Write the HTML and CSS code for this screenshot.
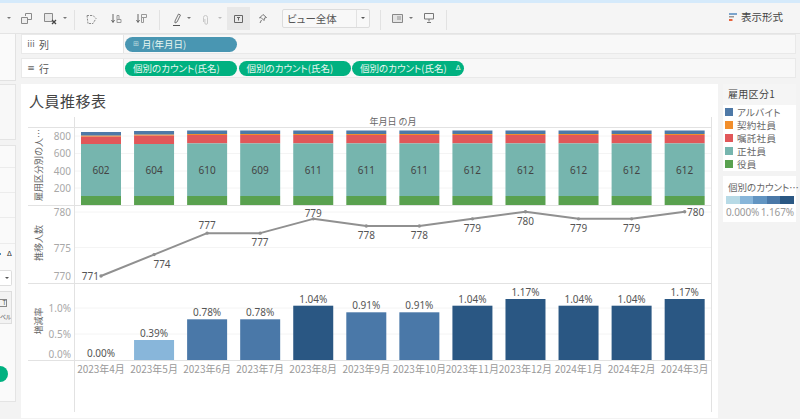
FILE: index.html
```html
<!DOCTYPE html>
<html lang="ja">
<head>
<meta charset="utf-8">
<title>人員推移表</title>
<link rel="stylesheet" href="styles.css">
</head>
<body>
<div class="app">
  <div class="topstrip"></div>
  <header class="toolbar">
    <span class="dot t1"></span>
    <svg class="ic i-a" width="11" height="11" viewBox="0 0 11 11"><path d="M.5 4.500h6v6h-6z" fill="#eee" stroke="#8a8a8a"/><path d="M4.500 3V.5h6v6H7" fill="none" stroke="#8a8a8a"/></svg>
    <svg class="ic i-b" width="13" height="12" viewBox="0 0 13 12"><path d="M.5.500h8v8h-8z" fill="#e8e8e8" stroke="#8a8a8a"/><path d="M8 7l4 4M12 7l-4 4" stroke="#444" stroke-width="1.300"/></svg>
    <span class="dot t2"></span>
    <span class="sep s1"></span>
    <svg class="ic i-c" width="11" height="11" viewBox="0 0 11 11"><path d="M1 1.500h6l3 3-3 5H2z" fill="none" stroke="#8a8a8a" stroke-dasharray="2 1"/></svg>
    <svg class="ic i-d" width="11" height="11" viewBox="0 0 11 11"><path d="M2 0v8M.5 6L2 8.500 3.500 6" fill="none" stroke="#666"/><path d="M6 1.500h2v4H6zM6 5.500h4v3H6z" fill="none" stroke="#999"/></svg>
    <svg class="ic i-e" width="11" height="11" viewBox="0 0 11 11"><path d="M2 0v8M.5 6L2 8.500 3.500 6" fill="none" stroke="#666"/><path d="M5.500.5h5v3h-5zM5.500 3.500h2v5h-2z" fill="none" stroke="#999"/></svg>
    <span class="sep s2"></span>
    <svg class="ic i-f" width="9" height="13" viewBox="0 0 9 13"><path d="M2 8l3.500-7 2 1L4 9l-2 1z" fill="none" stroke="#777"/><path d="M0 12.500h7" stroke="#555"/></svg>
    <span class="dot t3"></span>
    <svg class="ic i-g" width="8" height="12" viewBox="0 0 8 12"><path d="M1.500 8V3.500a2 2 0 0 1 4 0V9a1.300 1.300 0 0 1-2.600 0V5" fill="none" stroke="#c8c8c8"/></svg>
    <span class="dot t4"></span>
    <span class="tbtn"><svg width="9" height="8" viewBox="0 0 9 8"><path d="M.5.500h8v7h-8z" fill="none" stroke="#666"/><path d="M3 2.500h3M4.500 2.500v3" stroke="#666"/></svg></span>
    <svg class="ic i-h" width="8" height="10" viewBox="0 0 8 10"><path d="M4 .500l3.500 3-2 .5-.5 2.500-3-3L.5 4z" fill="none" stroke="#777"/><path d="M2.500 6L1 9" stroke="#777"/></svg>
    <div class="viewsel"><span class="vtext">ビュー全体</span><span class="vcaret"></span></div>
    <span class="sep s3"></span>
    <svg class="ic i-i" width="11" height="9" viewBox="0 0 11 9"><path d="M.5.500h10v8H.5z" fill="#e4e4e4" stroke="#888"/><path d="M5 2h4v4H5z" fill="#bbb"/></svg>
    <span class="dot t5"></span>
    <svg class="ic i-j" width="10" height="10" viewBox="0 0 10 10"><path d="M.5.500h9v5.500h-9zM5 6v2.500M3 9.500h4" fill="none" stroke="#777"/></svg>
    <span class="sep s4"></span>
    <div class="showme">
      <svg width="8" height="9" viewBox="0 0 8 9"><path d="M0 0h8v2H0z" fill="#7ba4cc"/><path d="M0 3h5v1.500H0z" fill="#999"/><path d="M0 6h3.500v2H0z" fill="#e8643c"/></svg>
      <span>表示形式</span>
    </div>
  </header>

  <div class="shelves">
    <div class="leftstub"></div>
    <div class="shelfcol">
      <div class="shelf">
        <div class="shelfname"><span class="ico">iii</span><span>列</span></div>
        <div class="pills"><span class="pill blue"><span class="plus">⊞</span>月(年月日)</span></div>
      </div>
      <div class="shelf">
        <div class="shelfname"><span class="ico">≡</span><span>行</span></div>
        <div class="pills">
          <span class="pill green">個別のカウント(氏名)</span>
          <span class="pill green">個別のカウント(氏名)</span>
          <span class="pill green">個別のカウント(氏名)<span class="delta">Δ</span></span>
        </div>
      </div>
    </div>
  </div>

  <div class="work">
    <aside class="leftpanel">
      <div class="lcard c1"></div>
      <div class="lcard c2">
        <div class="lrow r1"></div>
        <div class="lrow r2"></div>
        <div class="lrow r3"></div>
        <div class="lrow r4"></div>
        <div class="rd"><i class="bluedot"></i><span class="ldelta">Δ</span></div>
        <div class="lrow r5"><span class="ddcaret"></span></div>
        <div class="lrow r6"><span class="tbox">T</span><span class="lbl">ベル</span></div>
        <div class="lrow r7"><span class="gpill"></span></div>
      </div>
    </aside>

    <main class="canvas">
      <h1 class="title">人員推移表</h1>
      <svg id="chart" class="chart" width="697" height="334" viewBox="21 84 697 334" aria-label="人員推移表"></svg>
    </main>

    <aside class="rightpanel">
      <section class="legend">
        <h2 class="legtitle">雇用区分1</h2>
        <ul class="leglist">
          <li><i class="sw c-a"></i>アルバイト</li>
          <li><i class="sw c-b"></i>契約社員</li>
          <li><i class="sw c-c"></i>嘱託社員</li>
          <li><i class="sw c-d"></i>正社員</li>
          <li><i class="sw c-e"></i>役員</li>
        </ul>
      </section>
      <section class="legend ramp">
        <h2 class="legtitle2">個別のカウント…</h2>
        <div class="rampbar"><i class="g1"></i><i class="g2"></i><i class="g3"></i><i class="g4"></i><i class="g5"></i></div>
        <div class="ramplbl"><span>0.000%</span><span>1.167%</span></div>
      </section>
    </aside>
  </div>
</div>
<script src="chart.js"></script>
</body>
</html>
```
FILE: styles.css
```css
* { box-sizing: border-box; }
html, body { margin: 0; padding: 0; }
body { width: 800px; height: 419px; overflow: hidden; background: #f3f3f3; font-family: "Noto Sans CJK JP", "Noto Sans", sans-serif; font-feature-settings: "palt"; color: #555; }
.app { display: flex; flex-direction: column; width: 800px; height: 419px; }
.topstrip { height: 3px; background: #d5eafb; flex: none; }
.toolbar { position: relative; height: 31px; flex: none; background: #f5f5f5; border-bottom: 1px solid #e4e4e4; }
.ic, .dot, .sep, .tbtn, .viewsel, .showme { position: absolute; }
.dot { width: 0; height: 0; border-left: 2px solid transparent; border-right: 2px solid transparent; border-top: 2px solid #777; top: 14px; }
.t1 { left: 7px; } .t2 { left: 63px; } .t3 { left: 187px; } .t4 { left: 218px; border-top-color: #bbb; } .t5 { left: 409px; }
.sep { width: 1px; top: 7px; height: 20px; background: #e2e2e2; }
.s1 { left: 74px; } .s2 { left: 159px; } .s3 { left: 380px; } .s4 { left: 446px; }
.i-a { left: 21px; top: 10px; } .i-b { left: 44px; top: 10px; } .i-c { left: 86px; top: 11px; } .i-d { left: 111px; top: 11px; } .i-e { left: 136px; top: 11px; }
.i-f { left: 173px; top: 10px; } .i-g { left: 202px; top: 11px; } .i-h { left: 259px; top: 11px; } .i-i { left: 392px; top: 11px; } .i-j { left: 424px; top: 10px; }
.tbtn { left: 227px; top: 4px; width: 23px; height: 23px; background: #e8e8e8; display: flex; align-items: center; justify-content: center; }
.viewsel { left: 282px; top: 6px; width: 88px; height: 19px; background: #f8f8f8; border: 1px solid #dcdcdc; border-radius: 2px; display: flex; align-items: center; }
.vtext { flex: 1; padding-left: 4px; font-size: 10.500px; color: #555; }
.vcaret { width: 13px; height: 100%; border-left: 1px solid #e2e2e2; position: relative; }
.vcaret::after { content: ""; position: absolute; left: 4px; top: 7px; border-left: 2px solid transparent; border-right: 2px solid transparent; border-top: 2px solid #555; }
.showme { left: 729px; top: 6px; display: flex; align-items: center; gap: 4px; font-size: 10.500px; color: #444; line-height: 16px; font-feature-settings: normal; }

.shelves { display: flex; flex: none; height: 49px; }
.leftstub { width: 16px; height: 47px; background: #fafafa; border-right: 1px solid #e2e2e2; border-bottom: 1px solid #e2e2e2; }
.shelfcol { flex: 1; display: flex; flex-direction: column; gap: 4px; padding-left: 5px; padding-right: 4px; }
.shelf { height: 20px; display: flex; background: #f8f8f8; border: 1px solid #e9e9e9; }
.shelfname { width: 102px; flex: none; background: #fff; border-right: 1px solid #e4e4e4; display: flex; align-items: center; gap: 4px; padding-left: 5px; font-size: 10px; color: #555; }
.ico { font-size: 9px; width: 8px; text-align: center; font-family: "DejaVu Sans", sans-serif; color: #666; }
.pills { display: flex; gap: 1.500px; align-items: center; padding-left: 1px; }
.pill { height: 15px; width: 112px; border-radius: 8px; display: flex; align-items: center; padding-left: 8px; font-size: 9.500px; white-space: nowrap; color: #e8f6f0; }
.pill.blue { background: #4996b2; }
.pill.green { background: #00b180; }
.plus { font-size: 7px; margin-right: 3px; font-family: "DejaVu Sans", sans-serif; opacity: .7; }
.delta { margin-left: 9px; font-size: 7px; font-family: "DejaVu Sans", sans-serif; }

.work { flex: 1; display: flex; min-height: 0; padding-top: 1px; }
.leftpanel { width: 16px; flex: none; }
.lcard { background: #f8f8f8; border: 1px solid #e4e4e4; border-left: 0; }
.c1 { height: 56px; margin-bottom: 5px; }
.c2 { height: 257px; background: #fafafa; display: flex; flex-direction: column; }
.lrow { border-bottom: 1px solid #ececec; position: relative; overflow: hidden; flex: none; }
.r1 { height: 22px; } .r2 { height: 25px; } .r3 { height: 25px; } .r4 { height: 26px; }
.rd { height: 26px; position: relative; flex: none; }
.bluedot { position: absolute; left: 0; top: 9px; width: 1px; height: 2px; background: #4e8fc0; }
.ldelta { position: absolute; left: 7px; top: 5px; font-size: 7px; line-height: 10px; font-family: "DejaVu Sans", sans-serif; color: #333; }
.r5 { height: 16px; background: #fff; border: 1px solid #ddd; border-left: 0; margin-right: 3px; border-radius: 0 2px 2px 0; }
.ddcaret { position: absolute; right: 2px; top: 6px; border-left: 2px solid transparent; border-right: 2px solid transparent; border-top: 2px solid #555; }
.r6 { height: 33px; margin: 5px 3px 0 0; border: 1px solid #ddd; border-left: 0; background: #f3f3f3; }
.tbox { position: absolute; left: 0; top: 7px; width: 7px; height: 8px; border: 1px solid #888; border-left: 0; font-size: 6px; line-height: 6px; text-align: right; color: #555; }
.lbl { position: absolute; right: 0; top: 20px; font-size: 6px; letter-spacing: -.3px; line-height: 10px; color: #555; white-space: nowrap; }
.r7 { flex: 1; border-bottom: 0; overflow: visible; }
.gpill { position: absolute; right: 7px; top: 42px; width: 16px; height: 16px; border-radius: 8px; background: #00b180; }

.canvas { position: relative; margin-left: 5px; width: 697px; height: 334px; background: #fff; flex: none; }
.title { position: absolute; left: 8px; top: 5px; margin: 0; font-size: 15px; font-weight: 400; letter-spacing: .5px; line-height: 24px; color: #444; z-index: 1; font-feature-settings: normal; }
.chart { display: block; }
.chart text { font-family: "Noto Sans", "Noto Sans CJK JP", sans-serif; }
.grid { stroke: #f4f4f4; stroke-width: 1; }
.axisline { stroke: #e2e2e2; stroke-width: 1; }
.tick { font-size: 10px; fill: #a8a8a8; text-anchor: end; }
.chart .cap { font-size: 9px; fill: #666; text-anchor: middle; font-family: "Noto Sans CJK JP", sans-serif; font-feature-settings: normal; }
.chart .month { font-size: 10px; fill: #999; text-anchor: middle; font-family: "Noto Sans CJK JP", sans-serif; }
.val { font-size: 10px; fill: #444; text-anchor: middle; }
.vallabel { font-size: 10px; fill: #555; text-anchor: middle; }
.line { fill: none; stroke: #909090; stroke-width: 2; stroke-linejoin: round; }
.pt { fill: #909090; }

.rightpanel { width: 73px; margin-left: 5px; display: flex; flex-direction: column; gap: 5px; flex: none; }
.legend { background: #fff; }
.legtitle { margin: 0; height: 21px; padding-left: 5px; background: #f5f5f5; font-size: 10px; font-weight: 400; line-height: 20px; color: #444; letter-spacing: .3px; font-feature-settings: normal; }
.leglist { list-style: none; margin: 0; padding: 0 0 1px 2px; }
.leglist li { display: flex; align-items: center; gap: 4px; height: 13px; font-size: 9.500px; color: #666; white-space: nowrap; letter-spacing: .3px; }
.sw { width: 8px; height: 8px; flex: none; }
.c-a { background: #4e79a7; } .c-b { background: #f28e2b; } .c-c { background: #e15759; } .c-d { background: #76b5ae; } .c-e { background: #59a14f; }
.ramp { height: 46px; padding: 4px 2px 0 3px; }
.legtitle2 { margin: 0 0 0 2px; font-size: 9.500px; font-weight: 400; color: #666; line-height: 14px; white-space: nowrap; }
.rampbar { display: flex; height: 8px; margin-top: 2px; width: 68px; }
.rampbar i { flex: 1; }
.g1 { background: #b7dae6; } .g2 { background: #88b6da; } .g3 { background: #6295c2; } .g4 { background: #4a78a8; } .g5 { background: #2a5783; }
.ramplbl { display: flex; justify-content: space-between; width: 68px; font-family: "Noto Sans", sans-serif; font-size: 10px; letter-spacing: -.1px; color: #999; line-height: 14px; white-space: nowrap; margin-top: 1px; }
```
FILE: chart.js
```js
var NS = "http://www.w3.org/2000/svg";
var svg = document.getElementById("chart");
function el(name, attrs, text) {
  var n = document.createElementNS(NS, name);
  for (var k in attrs) n.setAttribute(k, attrs[k]);
  if (text !== undefined) n.textContent = text;
  svg.appendChild(n);
  return n;
}
var months = ["2023年4月","2023年5月","2023年6月","2023年7月","2023年8月","2023年9月","2023年10月","2023年11月","2023年12月","2024年1月","2024年2月","2024年3月"];
var cx = months.map(function (_, i) { return 101 + i * 53.06; });

// gridlines
[188, 171, 153.5, 136, 247.5, 212, 334, 308].forEach(function (y) {
  el("line", { x1: 75, x2: 711, y1: y, y2: y, "class": "grid" });
});

// stacked bars: y of blue top, orange top, red top, teal top
var tops = [[132,135.7,136.7,144],[131,134.7,135.7,144]];
for (var i = 2; i < 12; i++) tops.push([130.5, 134, 135, 143.4]);
var counts = [602,604,610,609,611,611,611,612,612,612,612,612];
cx.forEach(function (c, i) {
  var x = c - 20, t = tops[i];
  el("rect", { x: x, y: t[0], width: 40, height: t[1] - t[0], fill: "#4e79a7" });
  el("rect", { x: x, y: t[1], width: 40, height: t[2] - t[1], fill: "#f28e2b" });
  el("rect", { x: x, y: t[2], width: 40, height: t[3] - t[2], fill: "#e15759" });
  el("rect", { x: x, y: t[3], width: 40, height: 196 - t[3], fill: "#76b5ae" });
  el("rect", { x: x, y: 196, width: 40, height: 9, fill: "#59a14f" });
  el("text", { x: c, y: 174, "class": "val" }, counts[i]);
});

// line
var people = [771,774,777,777,779,778,778,779,780,779,779,780];
var ly = people.map(function (p) { return 211.7 + (780 - p) * 7.15; });
el("polyline", { points: cx.map(function (c, i) { return c + "," + ly[i]; }).join(" "), "class": "line" });
cx.forEach(function (c, i) { el("circle", { cx: c, cy: ly[i], r: 1.7, "class": "pt" }); });
var labelDy = [4, 13, -4, 13, -2, 13, 13, 13, 13, 13, 13, 4];
cx.forEach(function (c, i) {
  var lx = c;
  if (i === 0) lx = 90.3;
  if (i === 1) lx = 162;
  if (i === 3) lx = 260;
  if (i === 11) lx = 695.7;
  el("text", { x: lx, y: ly[i] + labelDy[i], "class": "vallabel" }, people[i]);
});

// rate bars
var rates = ["0.00%","0.39%","0.78%","0.78%","1.04%","0.91%","0.91%","1.04%","1.17%","1.04%","1.04%","1.17%"];
var rtop = [360,340,319.3,319.3,305.7,312.3,312.3,305.7,299,305.7,305.7,299];
var rfill = [null,"#88b6da","#4a78a8","#4a78a8","#2a5783","#4a78a8","#4a78a8","#2a5783","#2a5783","#2a5783","#2a5783","#2a5783"];
cx.forEach(function (c, i) {
  if (rfill[i]) el("rect", { x: c - 20, y: rtop[i], width: 40, height: 360 - rtop[i], fill: rfill[i] });
  el("text", { x: c, y: rtop[i] - 3, "class": "vallabel" }, rates[i]);
  el("text", { x: c, y: 373, "class": "month" }, months[i]);
});

// frames
[127.5, 205.5, 283.5, 360.5].forEach(function (y) {
  el("line", { x1: 28, x2: 711, y1: y, y2: y, "class": "axisline" });
});
[74.5, 711.5].forEach(function (x) {
  el("line", { x1: x, x2: x, y1: 117, y2: 412, "class": "axisline" });
});

// axis ticks
[[800,139.6],[600,157],[400,174.6],[200,191.6],[780,215.6],[775,251.6],[770,279.6],["1.0%",311.6],["0.5%",337.6],["0.0%",357.6]].forEach(function (t) {
  el("text", { x: 71, y: t[1], "class": "tick" }, t[0]);
});

// captions
el("text", { x: 393, y: 125, "class": "cap" }, "年月日 の月");
function vcap(x, y, s) { el("text", { x: x, y: y, "class": "cap", transform: "rotate(-90 " + x + " " + y + ")" }, s); }
vcap(42, 165, "雇用区分別の人…");
vcap(42, 243, "推移人数");
vcap(42, 321, "増減率");
```
